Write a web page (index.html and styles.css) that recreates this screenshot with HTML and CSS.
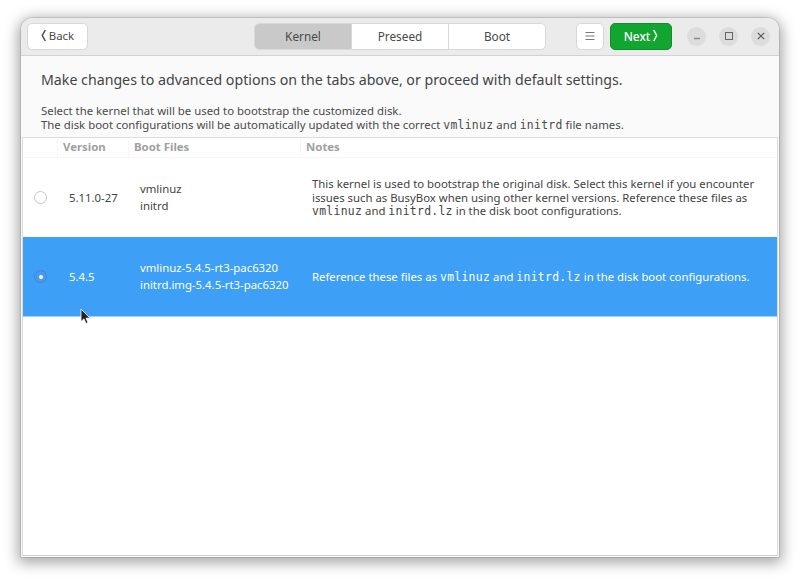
FILE: index.html
```html
<!DOCTYPE html>
<html lang="en">
<head>
<meta charset="utf-8">
<title>Kernel</title>
<link rel="stylesheet" href="styles.css">
</head>
<body>
<div class="window">
  <header class="header">
    <button class="btn back"><svg class="chev" width="5" height="13" viewBox="0 0 5 13"><path d="M4.3 1L1.3 6.5l3 5.5" stroke="#4a4a4a" stroke-width="1.5" fill="none"/></svg><span class="btn-label">Back</span></button>
    <div class="tabs">
      <div class="tab active">Kernel</div>
      <div class="tab">Preseed</div>
      <div class="tab">Boot</div>
    </div>
    <button class="btn menu" aria-label="Menu">
      <svg width="10" height="10" viewBox="0 0 10 10"><path d="M0.5 1.5h9M0.5 5h9M0.5 8.5h9" stroke="#777" stroke-width="1" fill="none"/></svg>
    </button>
    <button class="btn next"><span class="btn-label">Next</span><svg class="chev-r" width="5" height="13" viewBox="0 0 5 13"><path d="M.7 1l3 5.5-3 5.5" stroke="#fff" stroke-width="1.5" fill="none"/></svg></button>
    <div class="wc first"><svg width="10" height="10" viewBox="0 0 10 10"><path d="M2 7.5h6" stroke="#8a8a8a" stroke-width="1.4"/></svg></div>
    <div class="wc"><svg width="10" height="10" viewBox="0 0 10 10"><rect x="1.5" y="1.5" width="7" height="7" stroke="#666" stroke-width="1" fill="none"/></svg></div>
    <div class="wc"><svg width="10" height="10" viewBox="0 0 10 10"><path d="M1.8 1.8l6.4 6.4M8.2 1.8l-6.4 6.4" stroke="#555" stroke-width="1.2"/></svg></div>
  </header>
  <main class="content">
    <h1 class="title">Make changes to advanced options on the tabs above, or proceed with default settings.</h1>
    <p class="sub">Select the kernel that will be used to bootstrap the customized disk.<br>The disk boot configurations will be automatically updated with the correct <code>vmlinuz</code> and <code>initrd</code> file names.</p>
    <div class="table">
      <div class="thead">
        <div class="th"></div>
        <div class="th">Version</div>
        <div class="th">Boot Files</div>
        <div class="th">Notes</div>
      </div>
      <div class="row">
        <div class="cell radio-cell"><span class="radio"></span></div>
        <div class="cell">5.11.0-27</div>
        <div class="cell files">vmlinuz<br>initrd</div>
        <div class="cell notes">This kernel is used to bootstrap the original disk. Select this kernel if you encounter<br>issues such as BusyBox when using other kernel versions. Reference these files as<br><code>vmlinuz</code> and <code>initrd.lz</code> in the disk boot configurations.</div>
      </div>
      <div class="row selected">
        <div class="cell radio-cell"><span class="radio on"></span></div>
        <div class="cell">5.4.5</div>
        <div class="cell files">vmlinuz-5.4.5-rt3-pac6320<br>initrd.img-5.4.5-rt3-pac6320</div>
        <div class="cell notes">Reference these files as <code>vmlinuz</code> and <code>initrd.lz</code> in the disk boot configurations.</div>
      </div>
    </div>
  </main>
</div>
<svg class="cursor" width="11" height="17" viewBox="0 0 11 17"><path d="M1 1v12.5l3-2.6 2 4.6 2-.9-2-4.4h4z" fill="#222" stroke="#fff" stroke-width=".8"/></svg>
</body>
</html>
```
FILE: styles.css
```css
* { box-sizing: border-box; }
html, body { margin: 0; height: 581px; overflow: hidden; background: #fff; }
body { padding: 18px 21px 24px; font-family: "Noto Sans", sans-serif; font-size: 11.8px; color: #3d3d3d; position: relative; }
.window { height: 539px; display: flex; flex-direction: column; border-radius: 12px 12px 0 0; background: #fafafa; box-shadow: 0 3px 14px 3px rgba(0,0,0,.35), 0 0 0 1px rgba(0,0,0,.1); overflow: hidden; }
.header { height: 38px; flex: none; display: flex; align-items: center; padding: 0 8px 1px 6px; background: #ebebeb; border-bottom: 1px solid #d2d2d2; }
.btn { height: 27px; border: 1px solid #d8d8d8; border-radius: 5px; background: #fff; font: inherit; color: #4a4a4a; padding: 0 0 1px; display: flex; align-items: center; justify-content: center; }
.back { width: 61px; font-size: 11.4px; }
.chev { margin-right: 3px; }
.tabs { margin-left: 166px; width: 292px; height: 27px; display: flex; background: #fff; border: 1px solid #d8d8d8; border-radius: 5px; overflow: hidden; }
.tab { flex: 1; display: flex; align-items: center; justify-content: center; color: #4a4a4a; border-left: 1px solid #d8d8d8; }
.tab:first-child { border-left: 0; }
.tab.active { background: #c9c9c9; }
.menu { width: 28px; margin-left: 30px; }
.next { width: 62px; margin-left: 6px; background: #12a52f; border-color: #0f8f29; color: #fff; font-weight: 500; }
.chev-r { margin-left: 3px; }
.wc { width: 19px; height: 19px; border-radius: 50%; background: #dcdcdc; margin-left: 13px; display: flex; align-items: center; justify-content: center; }
.wc.first { margin-left: 15px; }
.content { flex: 1; display: flex; flex-direction: column; min-height: 0; padding-top: 14px; }
.title { margin: 0 0 0 20px; font-size: 14.2px; font-weight: 400; line-height: 20px; color: #444; white-space: nowrap; }
.sub { margin: 14px 0 0 20px; font-size: 11.38px; line-height: 13.5px; color: #4a4a4a; white-space: nowrap; height: 33px; }
code { font-family: "DejaVu Sans Mono", monospace; font-size: 11.4px; line-height: 1; letter-spacing: .3px; }
.table { flex: 1; margin: 0 1px 1px; background: #fff; border: 1px solid #dcdcdc; border-bottom-color: #cfcfcf; }
.thead, .row { display: grid; grid-template-columns: 34px 71px 172px 1fr; }
.thead { height: 20px; border-bottom: 1px solid #f6f6f6; }
.th { padding-left: 5px; font-weight: 700; font-size: 11.4px; line-height: 18px; color: #a0a0a0; border-left: 1px solid #f6f6f6; }
.th:first-child { border-left: 0; }
.row { height: 79px; align-items: center; font-size: 11.35px; color: #444; }
.cell { padding-left: 12px; white-space: nowrap; }
.radio-cell { padding-left: 11px; display: flex; }
.files { line-height: 17px; padding-bottom: 2px; }
.notes { line-height: 13.6px; }
.radio { width: 13px; height: 13px; border: 1px solid #c6c6c6; border-radius: 50%; background: #fff; display: flex; align-items: center; justify-content: center; }
.selected { background: #3d9ff5; color: #fff; border-bottom: 1px solid #a5d0f7; height: 80px; }
.radio.on { background: #4a9aec; border-color: #3f86d8; }
.radio.on::after { content: ""; width: 4px; height: 4px; border-radius: 50%; background: #fff; }
.cursor { position: absolute; left: 80px; top: 308px; }
```
